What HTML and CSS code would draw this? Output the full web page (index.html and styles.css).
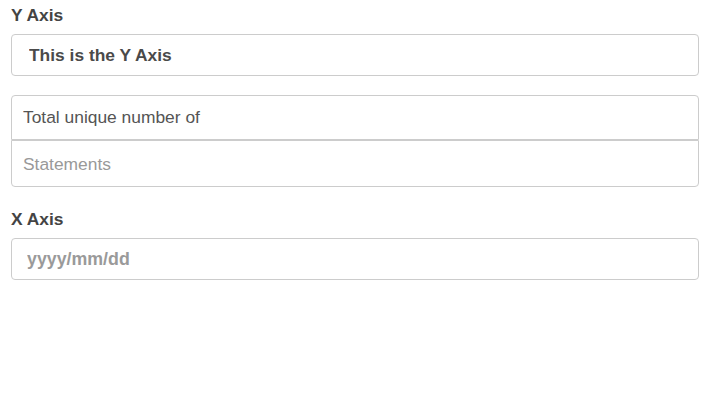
FILE: index.html
```html
<!DOCTYPE html>
<html lang="en">
<head>
    <meta charset="UTF-8">
    <meta name="viewport" content="width=device-width, initial-scale=1.0">
    <title>Chart axes</title>
    <link rel="stylesheet" href="styles.css">
</head>
<body>
    <form class="axis-form">
        <label class="axis-label" for="y-axis">Y Axis</label>
        <input class="field field-bold" id="y-axis" type="text" value="This is the Y Axis">

        <div class="field-group">
            <input class="field group-top" type="text" value="Total unique number of">
            <input class="field group-bottom" type="text" placeholder="Statements">
        </div>

        <label class="axis-label label-x" for="x-axis">X Axis</label>
        <input class="field field-bold field-date" id="x-axis" type="text" placeholder="yyyy/mm/dd">
    </form>
</body>
</html>
```

FILE: styles.css
```css
*{
    margin: 0;
    padding: 0;
    box-sizing: border-box;
}
body{
    background-color: #fff;
    font-family: "Liberation Sans", Arial, sans-serif;
    font-size: 17px;
    color: #555;
}
.axis-form{
    width: 688px;
    margin-left: 11px;
    padding-top: 5px;
    display: flex;
    flex-direction: column;
}
.axis-label{
    display: block;
    font-weight: bold;
    font-size: 17.4px;
    line-height: 20px;
    color: #444;
    margin-bottom: 9px;
}
.label-x{
    margin-top: 22px;
}
.field{
    display: block;
    width: 100%;
    height: 42px;
    padding: 0 11px;
    border: 1px solid #ccc;
    border-radius: 4px;
    font-family: inherit;
    font-size: 17.4px;
    color: #555;
    background-color: #fff;
    outline: none;
}
.field::placeholder{
    color: #999;
}
.field-bold{
    font-weight: bold;
    padding-left: 17px;
    color: #4a4a4a;
}
.field-date{
    padding-left: 15px;
    font-size: 17.8px;
}
.field-date::placeholder{
    color: #9a9a9a;
}
.field-group{
    margin-top: 19px;
    display: flex;
    flex-direction: column;
}
.group-top{
    height: 45px;
    border-bottom-left-radius: 0;
    border-bottom-right-radius: 0;
}
.group-bottom{
    height: 47px;
    padding-top: 1px;
    border-top-left-radius: 0;
    border-top-right-radius: 0;
}
```
